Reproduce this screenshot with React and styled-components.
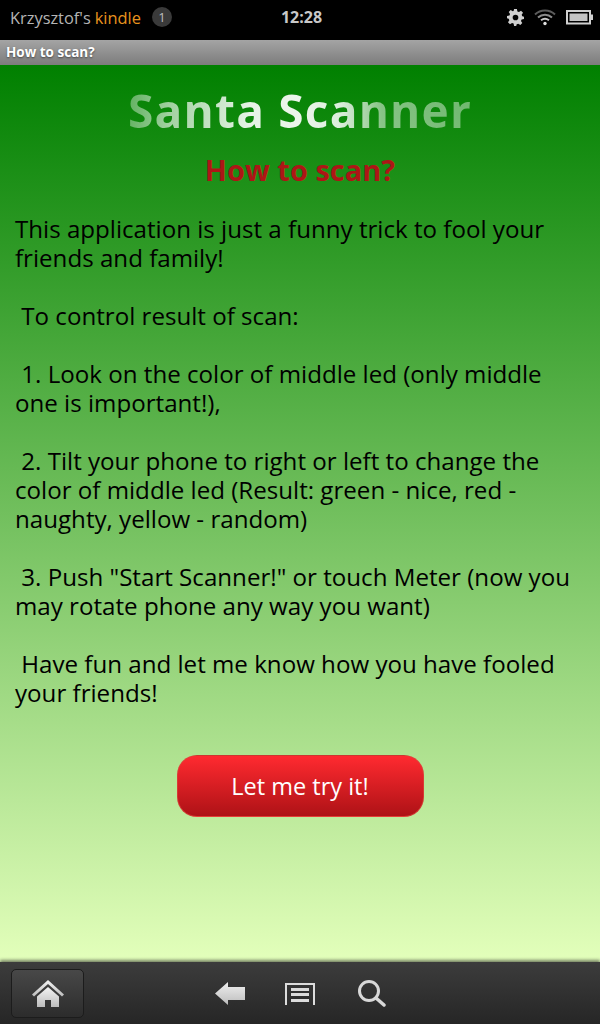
import React from 'react';
import styled, { createGlobalStyle } from 'styled-components';

const Global = createGlobalStyle`
    html, body { margin: 0; padding: 0; background: #000; }
    body { font-family: "Open Sans", "Noto Sans", sans-serif; }
`;

const Screen = styled.div`
    width: 600px;
    height: 1024px;
    display: flex;
    flex-direction: column;
    overflow: hidden;
`;

const StatusBar = styled.div`
    height: 40px;
    flex: none;
    background: #000;
    display: grid;
    grid-template-columns: 1fr auto 1fr;
    align-items: center;
    padding: 0 7px 6px 10px;
    box-sizing: border-box;
`;

const Owner = styled.div`
    display: flex;
    align-items: center;
    font-size: 16.4px;
    color: #b4b4b4;
`;

const Kindle = styled.span`
    color: #e8931e;
    margin-left: 4px;
`;

const Badge = styled.span`
    width: 20px;
    height: 20px;
    border-radius: 50%;
    background: #3a3a3a;
    color: #bdbdbd;
    font-size: 13px;
    display: flex;
    align-items: center;
    justify-content: center;
    margin-left: 11px;
`;

const Clock = styled.div`
    font-size: 16px;
    font-weight: 700;
    color: #c8c8c8;
`;

const StatusIcons = styled.div`
    display: flex;
    justify-content: flex-end;
    align-items: center;
    gap: 10px;
`;

const TitleBar = styled.div`
    height: 25px;
    flex: none;
    background: linear-gradient(#a4a4a4, #7c7c7c);
    color: #fff;
    font-size: 13.5px;
    font-weight: 700;
    line-height: 24px;
    padding-left: 6px;
    text-shadow: 0 1px 2px rgba(0, 0, 0, 0.5);
`;

const Content = styled.div`
    flex: 1;
    background: linear-gradient(#008000, #e3ffbb);
    display: flex;
    flex-direction: column;
    align-items: center;
    padding: 13px 15px 0;
`;

const AppName = styled.h1`
    margin: 0;
    font-size: 46px;
    line-height: 64px;
    font-weight: 700;
    letter-spacing: 1.2px;
    color: transparent;
    background: linear-gradient(90deg,
        rgba(255,255,255,.36) 0%,
        rgba(255,255,255,.62) 12%,
        rgba(255,255,255,.9) 36%,
        rgba(255,255,255,.92) 50%,
        rgba(255,255,255,.85) 62%,
        rgba(255,255,255,.5) 74%,
        rgba(255,255,255,.42) 100%);
    -webkit-background-clip: text;
    background-clip: text;
`;

const Heading = styled.h2`
    margin: 7px 0 0;
    font-size: 29px;
    line-height: 42px;
    font-weight: 700;
    color: #ad1616;
`;

const Body = styled.div`
    align-self: stretch;
    margin-top: 23px;
    font-size: 24.14px;
    line-height: 29px;
    color: #000;
`;

const Para = styled.p`
    margin: 0 0 29px;
    &:last-child { margin-bottom: 0; }
`;

const TryButton = styled.button`
    margin-top: 48px;
    width: 247px;
    height: 62px;
    border: 1px solid rgba(220, 70, 60, 0.7);
    border-radius: 20px;
    background: linear-gradient(#ff2a30, #ae1216);
    color: #fff;
    font-family: inherit;
    font-size: 23.5px;
    padding: 0;
`;

const BottomBar = styled.div`
    height: 62px;
    flex: none;
    box-sizing: border-box;
    background: linear-gradient(#3c3c3c, #262626);
    box-shadow: 0 -2px 3px rgba(30, 30, 30, 0.55);
    display: flex;
    align-items: center;
    position: relative;
    padding: 1px 0 0 11px;
`;

const HomeButton = styled.div`
    width: 73px;
    height: 49px;
    box-sizing: border-box;
    border: 1px solid #1c1c1c;
    border-radius: 5px;
    background: linear-gradient(#484848, #2c2c2c);
    display: flex;
    align-items: center;
    justify-content: center;
`;

const NavIcons = styled.div`
    display: flex;
    align-items: center;
    margin-left: 131px;
    gap: 39px;
`;

const SearchSvg = styled.svg`
    margin-left: 3px;
`;

const Gear = () => (
    <svg width="17" height="17" viewBox="0 0 24 24" fill="#cfcfcf">
        <path fillRule="evenodd" d="M10 0h4l.7 3.4 2.2.9L19.8 2.400l2.800 2.800-1.900 2.900.9 2.200L24 11v3l-3.400.7-.9 2.200 1.900 2.900-2.800 2.800-2.900-1.900-2.200.9L13 24h-3l-.7-3.400-2.200-.9-2.900 1.900-2.800-2.800 1.900-2.900-.9-2.200L0 13v-3l3.400-.7.9-2.200-1.900-2.900L5.200 1.400l2.900 1.900 1.200-.5zM12 8a4 4 0 1 0 0 8 4 4 0 0 0 0-8z" />
    </svg>
);

const Wifi = () => (
    <svg width="22" height="18" viewBox="0 0 22 18" fill="none" strokeLinecap="butt">
        <path d="M1 6.500C6.500 1.200 15.500 1.200 21 6.500" stroke="#5c5c5c" strokeWidth="2" />
        <path d="M4 9.500C8 5.800 14 5.800 18 9.500" stroke="#8c8c8c" strokeWidth="2" />
        <path d="M7 12.300C9.500 10.300 12.500 10.300 15 12.300" stroke="#c8c8c8" strokeWidth="2" />
        <circle cx="11" cy="15.500" r="1.700" fill="#e0e0e0" />
    </svg>
);

const Battery = () => (
    <svg width="27" height="15" viewBox="0 0 27 15">
        <rect x="1" y="1" width="23" height="12.500" fill="none" stroke="#d0d0d0" strokeWidth="2" />
        <rect x="3.500" y="3.500" width="18" height="7.500" fill="#c4c4c4" />
        <rect x="25" y="4.500" width="2" height="5.500" fill="#d0d0d0" />
    </svg>
);

const Home = () => (
    <svg width="32" height="28" viewBox="0 0 32 28">
        <defs>
            <linearGradient id="navFill" x1="0" y1="0" x2="0" y2="1">
                <stop offset="0" stopColor="#f4f4f4" />
                <stop offset="1" stopColor="#bcbcbc" />
            </linearGradient>
        </defs>
        <path d="M16 0 32 14.500 30 16.500 16 4 2 16.500 0 14.500z" fill="url(#navFill)" />
        <path fillRule="evenodd" d="M16 7 27 16.500V27H19V20H13V27H5V16.500z" fill="url(#navFill)" />
    </svg>
);

const Back = () => (
    <svg width="31" height="23" viewBox="0 0 31 23">
        <defs>
            <linearGradient id="backFill" x1="0" y1="0" x2="0" y2="1">
                <stop offset="0" stopColor="#f0f0f0" />
                <stop offset="1" stopColor="#bcbcbc" />
            </linearGradient>
        </defs>
        <path d="M0 11.500 13 0V5H30V18H13V23z" fill="url(#backFill)" />
    </svg>
);

const Menu = () => (
    <svg width="30" height="22" viewBox="0 0 30 22">
        <path d="M1 22V1H29V22" fill="none" stroke="#dcdcdc" strokeWidth="2" />
        <path d="M6 5H24V8H6zM6 10H24V13H6zM6 16H24V19H6z" fill="#dcdcdc" />
    </svg>
);

const Search = () => (
    <SearchSvg width="29" height="27" viewBox="0 0 29 27" fill="none" stroke="#d8d8d8" strokeLinecap="round">
        <circle cx="12" cy="11" r="9.500" strokeWidth="3" />
        <path d="M19 18 27 25" strokeWidth="3.500" />
    </SearchSvg>
);

const App = () => (
    <Screen>
        <Global />
        <StatusBar>
            <Owner>
                Krzysztof's<Kindle>kindle</Kindle>
                <Badge>1</Badge>
            </Owner>
            <Clock>12:28</Clock>
            <StatusIcons>
                <Gear />
                <Wifi />
                <Battery />
            </StatusIcons>
        </StatusBar>
        <TitleBar>How to scan?</TitleBar>
        <Content>
            <AppName>Santa Scanner</AppName>
            <Heading>How to scan?</Heading>
            <Body>
                <Para>This application is just a funny trick to fool your friends and family!</Para>
                <Para>&nbsp;To control result of scan:</Para>
                <Para>&nbsp;1. Look on the color of middle led (only middle one is important!),</Para>
                <Para>&nbsp;2. Tilt your phone to right or left to change the color of middle led (Result: green - nice, red - naughty, yellow - random)</Para>
                <Para>&nbsp;3. Push "Start Scanner!" or touch Meter (now you may rotate phone any way you want)</Para>
                <Para>&nbsp;Have fun and let me know how you have fooled your friends!</Para>
            </Body>
            <TryButton>Let me try it!</TryButton>
        </Content>
        <BottomBar>
            <HomeButton><Home /></HomeButton>
            <NavIcons>
                <Back />
                <Menu />
                <Search />
            </NavIcons>
        </BottomBar>
    </Screen>
);

export default App;
